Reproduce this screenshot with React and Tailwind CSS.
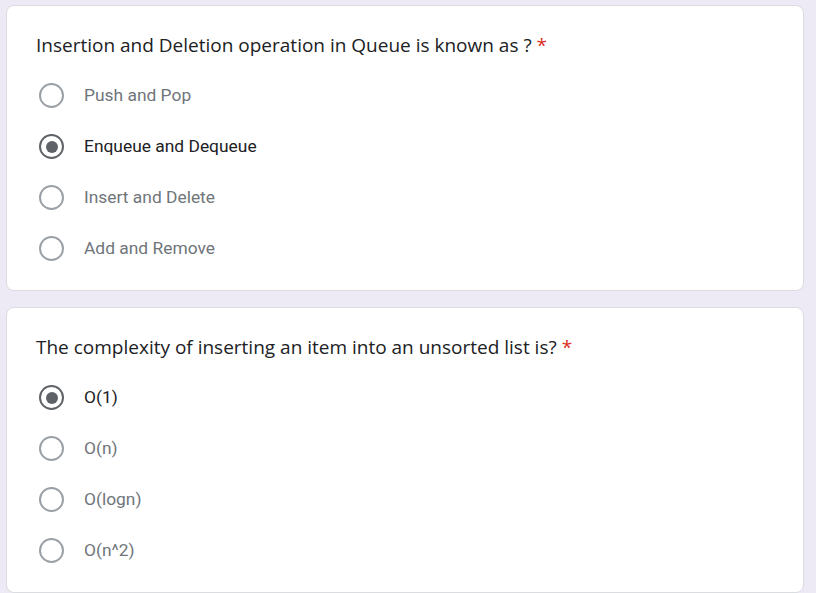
import React from 'react';

const QUESTIONS = [
  {
    id: 'q1',
    title: 'Insertion and Deletion operation in Queue is known as ?',
    options: ['Push and Pop', 'Enqueue and Dequeue', 'Insert and Delete', 'Add and Remove'],
    selected: 1,
  },
  {
    id: 'q2',
    title: 'The complexity of inserting an item into an unsorted list is?',
    options: ['O(1)', 'O(n)', 'O(logn)', 'O(n^2)'],
    selected: 0,
  },
];

function Radio({ checked }) {
  return (
    <div
      className={`w-[25px] h-[25px] rounded-full border-2 flex items-center justify-center shrink-0 ${
        checked ? 'border-[#5f6368]' : 'border-[#9aa0a6]'
      }`}
    >
      {checked && <div className="w-[12px] h-[12px] rounded-full bg-[#5f6368]" />}
    </div>
  );
}

function QuestionCard({ q }) {
  return (
    <div className="bg-white border border-[#dadce0] rounded-lg pl-[29px] pr-6 pt-[25px] pb-[16px]">
      <div className="font-['Open_Sans',sans-serif] text-[19px] leading-[28px] text-[#202124]">
        {q.title} <span className="text-[#d93025]">*</span>
      </div>
      <div className="mt-[11px] flex flex-col">
        {q.options.map((opt, i) => (
          <div key={opt} className="h-[51px] flex items-center gap-[20px] pl-[3px]">
            <Radio checked={i === q.selected} />
            <span
              className={`text-[17.4px] ${i === q.selected ? 'text-[#202124]' : 'text-[#70757a]'}`}
            >
              {opt}
            </span>
          </div>
        ))}
      </div>
    </div>
  );
}

export default function App() {
  return (
    <div
      className="w-[816px] h-[593px] overflow-hidden bg-[#ede9f5] pl-[6px] pr-[12px] pt-[5px] flex flex-col gap-[16px]"
      style={{ fontFamily: 'Roboto, "Open Sans", sans-serif' }}
    >
      {QUESTIONS.map((q) => (
        <QuestionCard key={q.id} q={q} />
      ))}
    </div>
  );
}
